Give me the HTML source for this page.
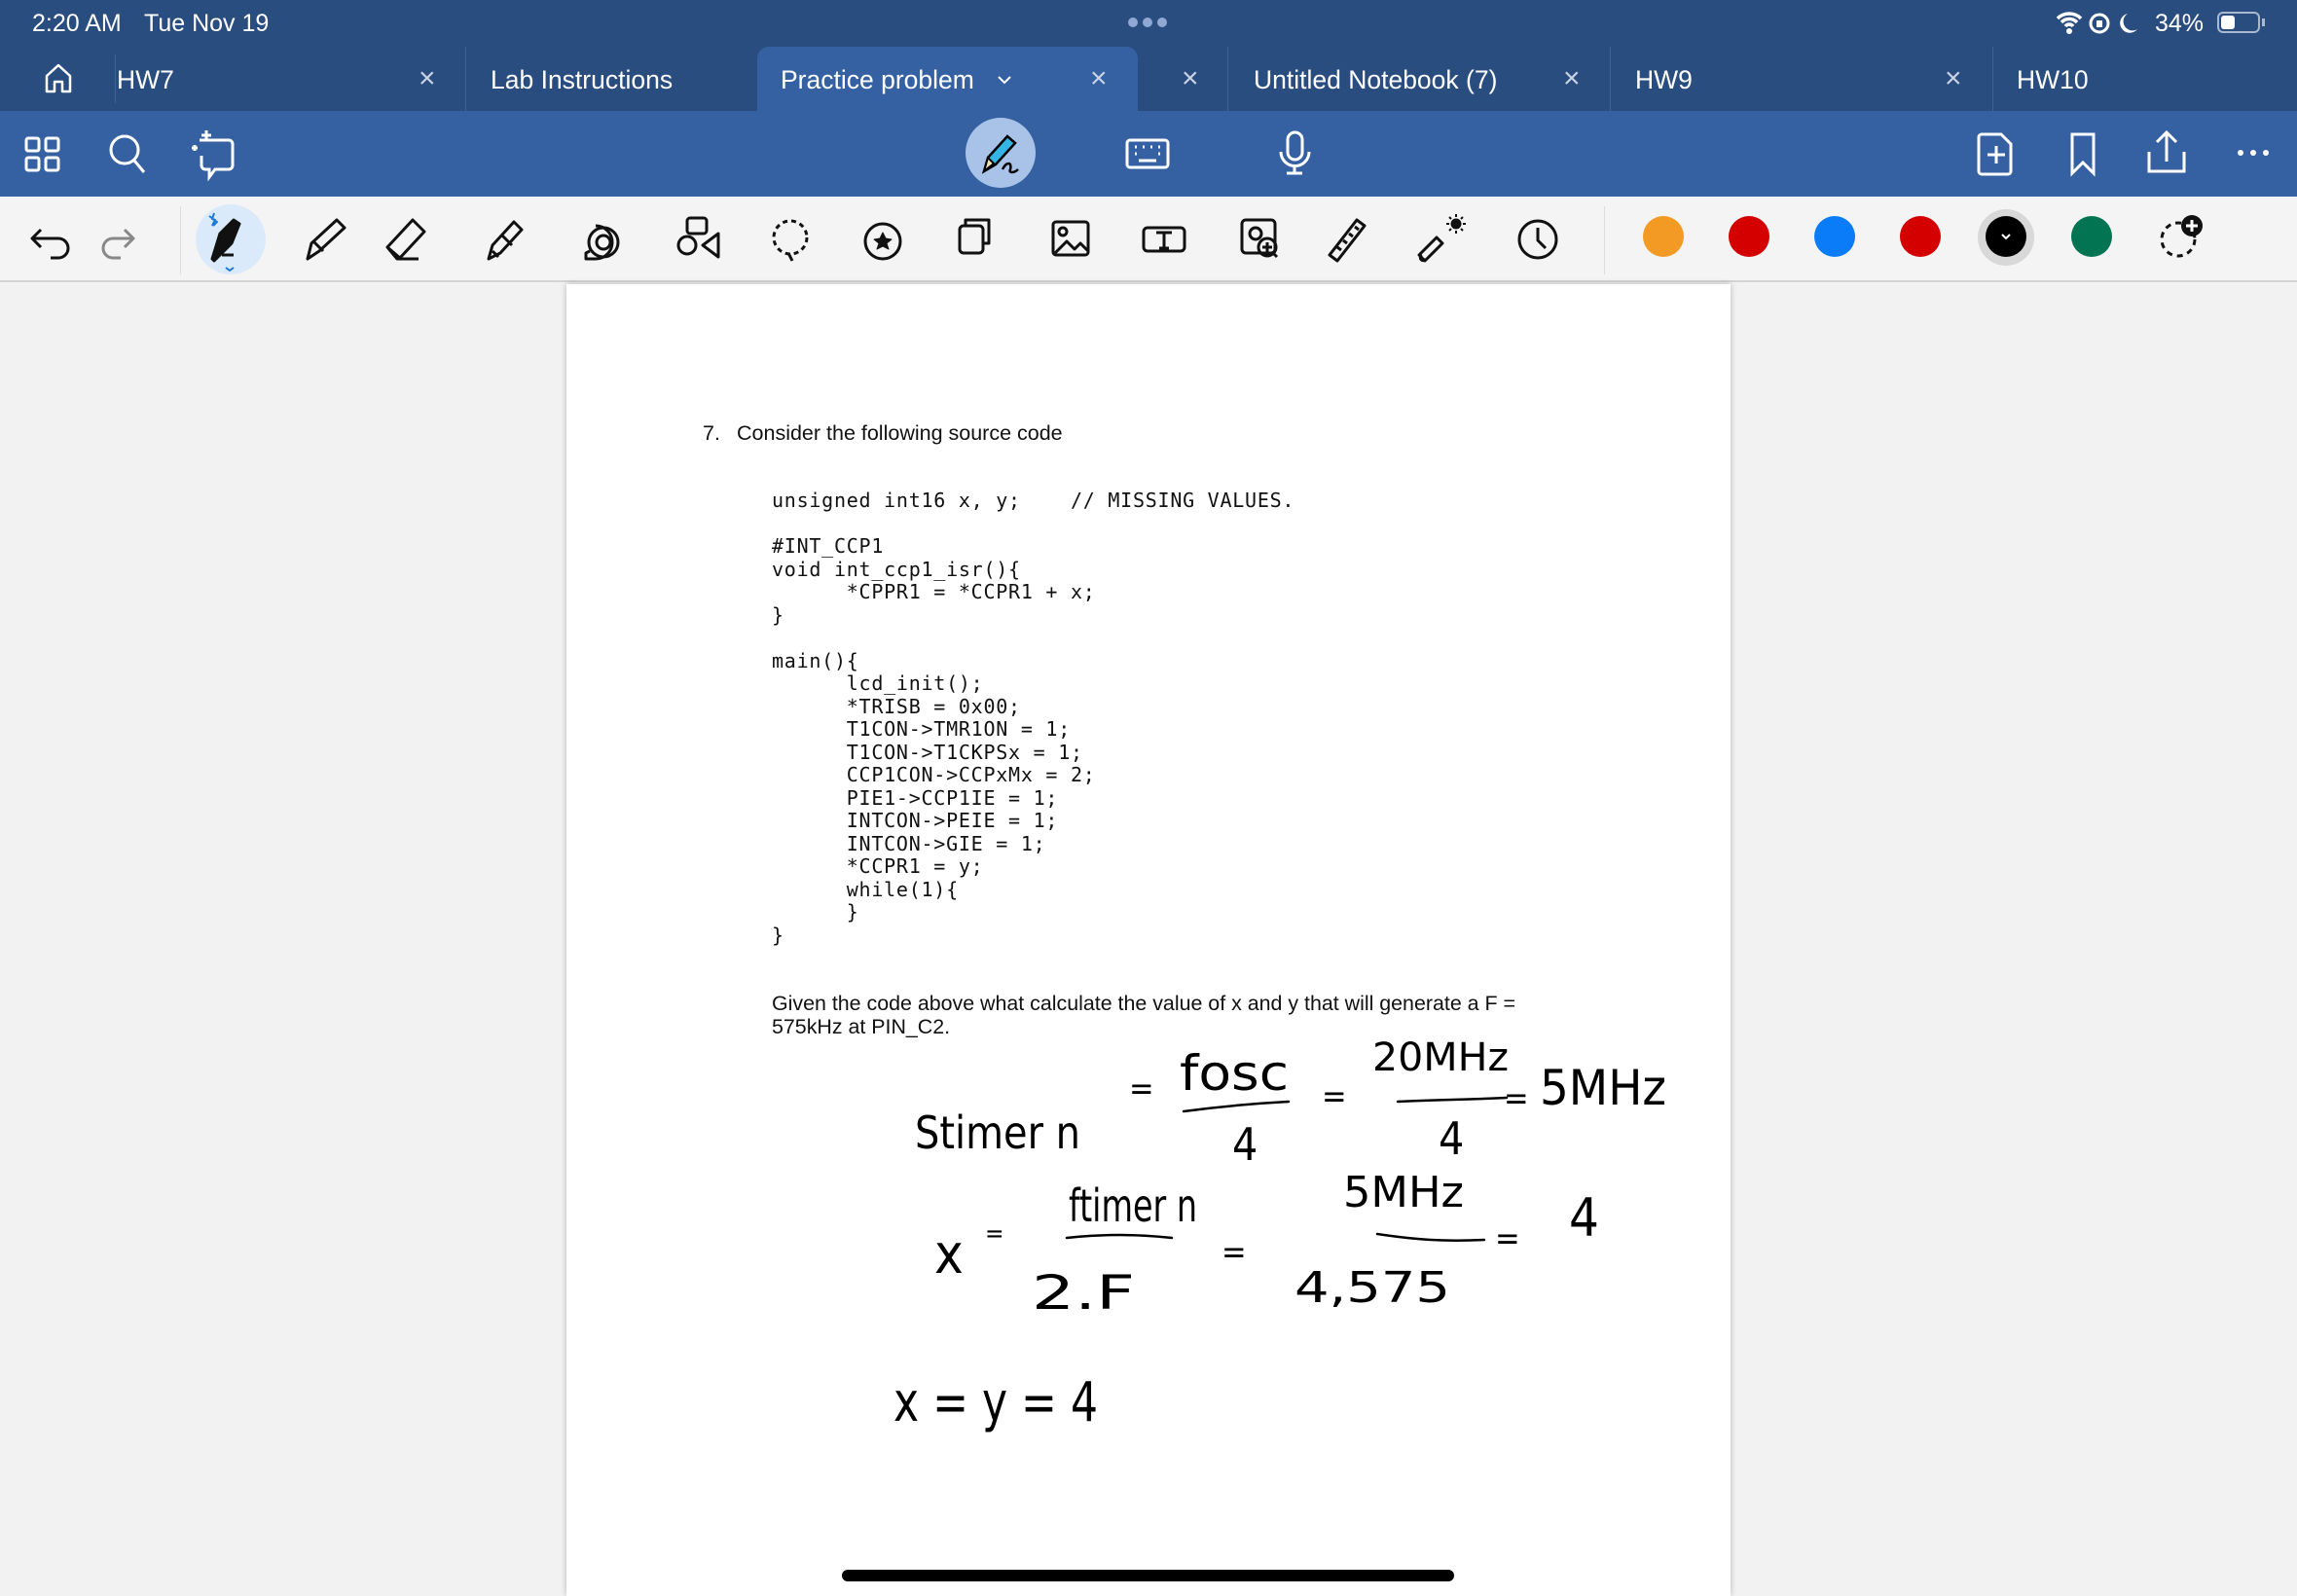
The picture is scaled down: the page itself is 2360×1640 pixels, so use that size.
<!DOCTYPE html>
<html><head><meta charset="utf-8"><style>
*{margin:0;padding:0;box-sizing:border-box}
body{width:2360px;height:1640px;position:relative;overflow:hidden;background:#f2f2f2;font-family:"Liberation Sans",sans-serif}
.a{position:absolute}
.w{color:#fff}
.tab{position:absolute;top:49px;height:66px;font-size:26.5px;color:#fff;line-height:66px}
.x{position:absolute;top:49px;line-height:64px;font-size:30px;color:#c8d3e6;font-weight:300}
.div{position:absolute;top:48px;width:1px;height:66px;background:#40618f}
.code{position:absolute;left:793px;font-family:"DejaVu Sans Mono","Liberation Mono",monospace;font-size:20px;color:#111;white-space:pre;line-height:23.5px;letter-spacing:0.75px}
.hw{font-family:"DejaVu Sans ExtraLight","DejaVu Sans Condensed","Liberation Sans Narrow",sans-serif;font-weight:200;fill:#000}
.dot{position:absolute;top:222px;width:42px;height:42px;border-radius:50%}
</style></head><body>
<div class="a" style="left:0;top:0;width:2360px;height:114px;background:#2a4d80"></div>
<div class="a" style="left:0;top:114px;width:2360px;height:88px;background:#3561a3"></div>
<div class="a" style="left:778px;top:48px;width:391px;height:70px;background:#3561a3;border-radius:12px 12px 0 0"></div>
<div class="a w" style="left:33px;top:10px;font-size:25px">2:20 AM</div>
<div class="a w" style="left:148px;top:10px;font-size:25px">Tue Nov 19</div>
<div class="a" style="left:1159px;top:18px;width:10px;height:10px;border-radius:50%;background:#8fa9d4"></div>
<div class="a" style="left:1174px;top:18px;width:10px;height:10px;border-radius:50%;background:#8fa9d4"></div>
<div class="a" style="left:1189px;top:18px;width:10px;height:10px;border-radius:50%;background:#8fa9d4"></div>
<svg class="a" style="left:2110px;top:8px" width="110" height="32" viewBox="0 0 110 32">
<path d="M4 11a17 17 0 0 1 24 0M8 15a11 11 0 0 1 16 0M12 19a5 5 0 0 1 8 0" stroke="#fff" stroke-width="3.5" fill="none"/><circle cx="16" cy="24" r="3" fill="#fff"/>
<circle cx="47" cy="16" r="9" stroke="#fff" stroke-width="3" fill="none"/><rect x="44" y="13" width="6" height="7" fill="#fff"/>
<path d="M76 6a10 10 0 1 0 10 16a9 9 0 0 1-10-16z" fill="#fff"/></svg>
<div class="a w" style="left:2214px;top:10px;font-size:25px">34%</div>
<div class="a" style="left:2278px;top:12px;width:44px;height:22px;border:2px solid #aab8cf;border-radius:6px"><div style="margin:2px;width:14px;height:14px;background:#fff;border-radius:3px"></div></div>
<div class="a" style="left:2324px;top:19px;width:3px;height:8px;background:#aab8cf"></div>
<svg class="a" style="left:44px;top:64px" width="32" height="32" viewBox="0 0 32 32"><path d="M4 14L16 3l12 11v16h-8v-10h-8v10H4z" stroke="#fff" stroke-width="2.5" fill="none" stroke-linejoin="round"/></svg>
<div class="div" style="left:118px;top:56px;height:50px"></div>
<div class="tab" style="left:120px">HW7</div><div class="x" style="left:430px">×</div>
<div class="div" style="left:478px"></div>
<div class="tab" style="left:504px">Lab Instructions</div>
<div class="tab" style="left:802px">Practice problem</div>
<svg class="a" style="left:1024px;top:76px" width="16" height="12"><path d="M2 3l6 6 6-6" stroke="#fff" stroke-width="2" fill="none"/></svg>
<div class="x" style="left:1120px">×</div>
<div class="x" style="left:1214px">×</div>
<div class="div" style="left:1261px"></div>
<div class="tab" style="left:1288px">Untitled Notebook (7)</div><div class="x" style="left:1606px">×</div>
<div class="div" style="left:1654px"></div>
<div class="tab" style="left:1680px">HW9</div><div class="x" style="left:1998px">×</div>
<div class="div" style="left:2047px"></div>
<div class="tab" style="left:2072px">HW10</div>
<svg class="a" style="left:0;top:114px" width="2360" height="88" viewBox="0 0 2360 88" fill="none" stroke="#fff" stroke-width="3">
<rect x="27" y="28" width="13" height="13" rx="2"/><rect x="47" y="28" width="13" height="13" rx="2"/><rect x="27" y="48" width="13" height="13" rx="2"/><rect x="47" y="48" width="13" height="13" rx="2"/>
<circle cx="128" cy="40" r="14"/><path d="M138 51l10 12"/>
<path d="M205 30h30a4 4 0 0 1 4 4v22a4 4 0 0 1-4 4h-14l-6 8v-8h-4a4 4 0 0 1-4-4v-10"/><path d="M212 20v10M207 25h10M200 35v6M197 38h6"/>
<circle cx="1028" cy="43" r="36" fill="#a9c3e8" stroke="none"/>
<path d="M1011 62l4-14 20-22 8 7-20 22z" fill="#35b5e5" stroke="#000" stroke-width="2.5"/><path d="M1011 62l4-14 6 6z" fill="#f3e3b0" stroke="#000" stroke-width="2"/><path d="M1030 60c4-8 10-8 8 0-2 4 4 4 8 0" stroke="#000" stroke-width="2.5"/>
<rect x="1158" y="30" width="42" height="28" rx="3"/><path d="M1166 37h2M1174 37h2M1182 37h2M1190 37h2M1166 44h2M1190 44h2M1170 51h18"/>
<rect x="1323" y="22" width="15" height="28" rx="7.5"/><path d="M1316 42a14 14 0 0 0 29 0M1330 56v8M1322 64h16"/>
<path d="M2036 24h20l10 10v28a3 3 0 0 1-3 3h-27a3 3 0 0 1-3-3V27a3 3 0 0 1 3-3zM2051 36v18M2042 45h18"/>
<path d="M2129 24h22v40l-11-11-11 11z"/>
<path d="M2226 22v30M2216 32l10-10 10 10M2208 42v20h36v-20"/>
<circle cx="2302" cy="43" r="3" fill="#fff" stroke="none"/><circle cx="2315" cy="43" r="3" fill="#fff" stroke="none"/><circle cx="2328" cy="43" r="3" fill="#fff" stroke="none"/>
</svg>
<div class="a" style="left:0;top:202px;width:2360px;height:88px;background:#f4f4f4;border-bottom:2px solid #d4d4d4"></div>
<div class="a" style="left:185px;top:212px;width:1px;height:70px;background:#ddd"></div>
<div class="a" style="left:1648px;top:212px;width:1px;height:70px;background:#ddd"></div>
<div class="a" style="left:201px;top:210px;width:72px;height:72px;border-radius:50%;background:#dbeafa"></div>
<svg class="a" style="left:0;top:202px" width="2360" height="88" viewBox="0 0 2360 88" fill="none" stroke="#111" stroke-width="3" stroke-linejoin="round">
<path d="M42 34l-9 9 9 9M33 43h27a10 10 0 0 1 0 20h-8"/>
<path d="M128 34l9 9-9 9M137 43h-21a10 10 0 0 0 0 20h8" stroke="#888"/>
<path d="M220 17l-2 6 3 1-3 6M215 20l8 6-4 4" stroke="#1c7ad6" stroke-width="2"/>
<path d="M218 64l8-26 14-14 6 4-8 20-18 18z" fill="#111"/><path d="M228 60h12" /><path d="M232 73l4 3 4-3" stroke="#1c7ad6" stroke-width="2"/>
<path d="M316 64l4-16 26-24 8 8-26 24z M322 46l10 10"/>
<path d="M408 64l-10-12 26-28 12 12-26 28zM398 52l14 12"/><path d="M410 64h20"/>
<path d="M502 64l4-14 22-24 8 8-22 24zM506 56l6 6M516 40l10 10"/>
<path d="M612 30a17 17 0 1 1 0 34h-10v-6l4-2"/><circle cx="620" cy="47" r="7"/><circle cx="620" cy="47" r="15"/>
<rect x="706" y="22" width="20" height="16" rx="3"/><circle cx="706" cy="50" r="9"/><path d="M738 38l-16 12 16 12z"/>
<circle cx="812" cy="42" r="17" stroke-dasharray="5 4"/><path d="M810 58l4 8"/>
<circle cx="907" cy="46" r="18"/><path d="M907 37l3 6 6 1-5 4 2 6-6-3-6 3 2-6-5-4 6-1z" fill="#111" stroke-width="1"/>
<rect x="986" y="30" width="24" height="28" rx="4"/><path d="M992 30v-6h24v24h-6"/>
<rect x="1082" y="26" width="36" height="34" rx="3"/><circle cx="1092" cy="36" r="4"/><path d="M1084 58l12-12 8 8 6-6 8 8"/>
<rect x="1175" y="32" width="42" height="24" rx="4"/><path d="M1188 37h16M1196 37v16M1191 53h10"/>
<rect x="1276" y="24" width="34" height="34" rx="4"/><circle cx="1290" cy="38" r="6"/><circle cx="1302" cy="52" r="9"/><path d="M1302 47v10M1297 52h10M1308 58l4 4"/>
<path d="M1366 60l28-36 8 6-28 36zM1374 52l4 3M1380 45l4 3M1386 38l4 3M1392 31l4 3"/>
<path d="M1464 66l-6-6 18-18 6 6zM1461 60a3 3 0 1 0 4 4"/><circle cx="1496" cy="28" r="4" fill="#111"/><path d="M1496 18v3M1496 35v3M1486 28h3M1503 28h3M1489 21l2 2M1501 33l2 2M1503 21l-2 2M1489 35l2-2" stroke-width="2"/>
<circle cx="1580" cy="44" r="19"/><path d="M1580 32v13l8 8"/>
</svg>
<div class="dot" style="left:1688px;background:#f39a25"></div>
<div class="dot" style="left:1776px;background:#d40000"></div>
<div class="dot" style="left:1864px;background:#0a7cf7"></div>
<div class="dot" style="left:1952px;background:#d40000"></div>
<div class="a" style="left:2032px;top:215px;width:58px;height:58px;border-radius:50%;background:#d8d8d8"></div>
<div class="dot" style="left:2040px;background:#000"></div>
<svg class="a" style="left:2053px;top:237px" width="16" height="12"><path d="M4 4l4 4 4-4" stroke="#fff" stroke-width="2" fill="none"/></svg>
<div class="dot" style="left:2128px;background:#027451"></div>
<svg class="a" style="left:2210px;top:214px" width="60" height="60" viewBox="0 0 60 60"><circle cx="28" cy="32" r="17" fill="none" stroke="#111" stroke-width="3" stroke-dasharray="6 5"/><circle cx="42" cy="18" r="11" fill="#111"/><path d="M42 12v12M36 18h12" stroke="#fff" stroke-width="3"/></svg>
<div class="a" style="left:582px;top:292px;width:1196px;height:1348px;background:#fff;box-shadow:0 0 6px rgba(0,0,0,0.25)"></div>
<div class="a" style="left:722px;top:433px;font-size:21.5px;color:#111">7.</div>
<div class="a" style="left:757px;top:433px;font-size:21.5px;color:#111">Consider the following source code</div>
<div class="code" style="top:503px">unsigned int16 x, y;    // MISSING VALUES.

#INT_CCP1
void int_ccp1_isr(){
      *CPPR1 = *CCPR1 + x;
}

main(){
      lcd_init();
      *TRISB = 0x00;
      T1CON->TMR1ON = 1;
      T1CON->T1CKPSx = 1;
      CCP1CON->CCPxMx = 2;
      PIE1->CCP1IE = 1;
      INTCON->PEIE = 1;
      INTCON->GIE = 1;
      *CCPR1 = y;
      while(1){
      }
}</div>
<div class="a" style="left:793px;top:1019px;font-size:21.4px;color:#111;line-height:24px">Given the code above what calculate the value of x and y that will generate a F =<br>575kHz at PIN_C2.</div>
<svg class="a" style="left:0;top:0" width="2360" height="1640" fill="none" stroke="#000" stroke-width="2.5" stroke-linecap="round">
<g class="hw" stroke="none">
<text x="940" y="1180" font-size="46" textLength="170" lengthAdjust="spacingAndGlyphs">Stimer n</text>
<text x="1160" y="1130" font-size="34">=</text>
<text x="1212" y="1120" font-size="50" textLength="112" lengthAdjust="spacingAndGlyphs">fosc</text>
<text x="1266" y="1192" font-size="46">4</text>
<text x="1358" y="1138" font-size="34">=</text>
<text x="1410" y="1100" font-size="40" textLength="140" lengthAdjust="spacingAndGlyphs">20MHz</text>
<text x="1478" y="1186" font-size="46">4</text>
<text x="1545" y="1140" font-size="34">=</text>
<text x="1582" y="1135" font-size="50" textLength="130" lengthAdjust="spacingAndGlyphs">5MHz</text>
<text x="960" y="1308" font-size="56">x</text>
<text x="1012" y="1276" font-size="26">=</text>
<text x="1098" y="1255" font-size="46" textLength="132" lengthAdjust="spacingAndGlyphs">ftimer n</text>
<text x="1060" y="1345" font-size="48" textLength="106" lengthAdjust="spacingAndGlyphs">2.F</text>
<text x="1255" y="1298" font-size="34">=</text>
<text x="1380" y="1240" font-size="44" textLength="124" lengthAdjust="spacingAndGlyphs">5MHz</text>
<text x="1330" y="1338" font-size="44" textLength="160" lengthAdjust="spacingAndGlyphs">4,575</text>
<text x="1536" y="1284" font-size="34">=</text>
<text x="1612" y="1270" font-size="54">4</text>
<text x="918" y="1460" font-size="56" textLength="210" lengthAdjust="spacingAndGlyphs">x = y = 4</text>
</g>
<path d="M1216 1142c30-4 70-8 108-10M1436 1132c40-2 70-2 112-4M1096 1272c40-4 70-4 108 0M1415 1268c40 6 70 8 110 6"/>
</svg>
<div class="a" style="left:865px;top:1613px;width:629px;height:12px;border-radius:6px;background:#000"></div>
</body></html>
